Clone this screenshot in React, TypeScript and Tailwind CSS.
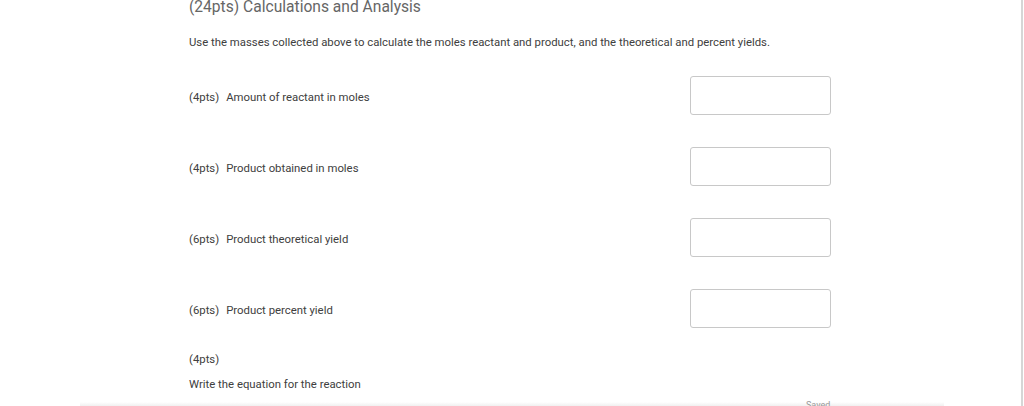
import React from 'react';

const rows = [
  { pts: '(4pts)', label: 'Amount of reactant in moles' },
  { pts: '(4pts)', label: 'Product obtained in moles' },
  { pts: '(6pts)', label: 'Product theoretical yield' },
  { pts: '(6pts)', label: 'Product percent yield' },
];

export default function App() {
  return (
    <div
      className="relative w-[1024px] h-[406px] overflow-hidden bg-white text-[#404040]"
      style={{ fontFamily: 'Roboto, "Noto Sans", sans-serif' }}
    >
      {/* right scroll edge */}
      <div className="absolute right-[1px] top-0 h-full w-[2px] bg-[#d6d6d6]" />

      <div className="pl-[189px] w-[831px]">
        <h2 className="text-[15.6px] leading-[18px] -mt-[2px] font-normal text-[#666]">
          (24pts) Calculations and Analysis
        </h2>

        <p className="mt-[19px] text-[11.35px] leading-[14px]">
          Use the masses collected above to calculate the moles reactant and product, and the theoretical and percent yields.
        </p>

        <div className="mt-[27px] flex flex-col gap-[32px]">
          {rows.map((r, i) => (
            <div key={i} className="flex items-center justify-between">
              <div className="flex items-center gap-[7px] text-[11.35px] leading-[14px] pt-[2px]">
                <span>{r.pts}</span>
                <span>{r.label}</span>
              </div>
              <input
                className="w-[141px] h-[39px] border border-[#c8c8c8] rounded-[3px] bg-white outline-none"
                type="text"
              />
            </div>
          ))}
        </div>

        <div className="mt-[24px] text-[11.35px] leading-[14px]">(4pts)</div>
        <div className="mt-[11px] text-[11.35px] leading-[14px]">Write the equation for the reaction</div>
      </div>

      {/* bottom fade band */}
      <div className="absolute left-[80px] right-[80px] bottom-0 h-[4px] bg-gradient-to-b from-white to-[#f0f0f0]" />
      <div className="absolute left-[806px] -bottom-[6px] text-[9px] text-[#999]">Saved</div>
    </div>
  );
}
